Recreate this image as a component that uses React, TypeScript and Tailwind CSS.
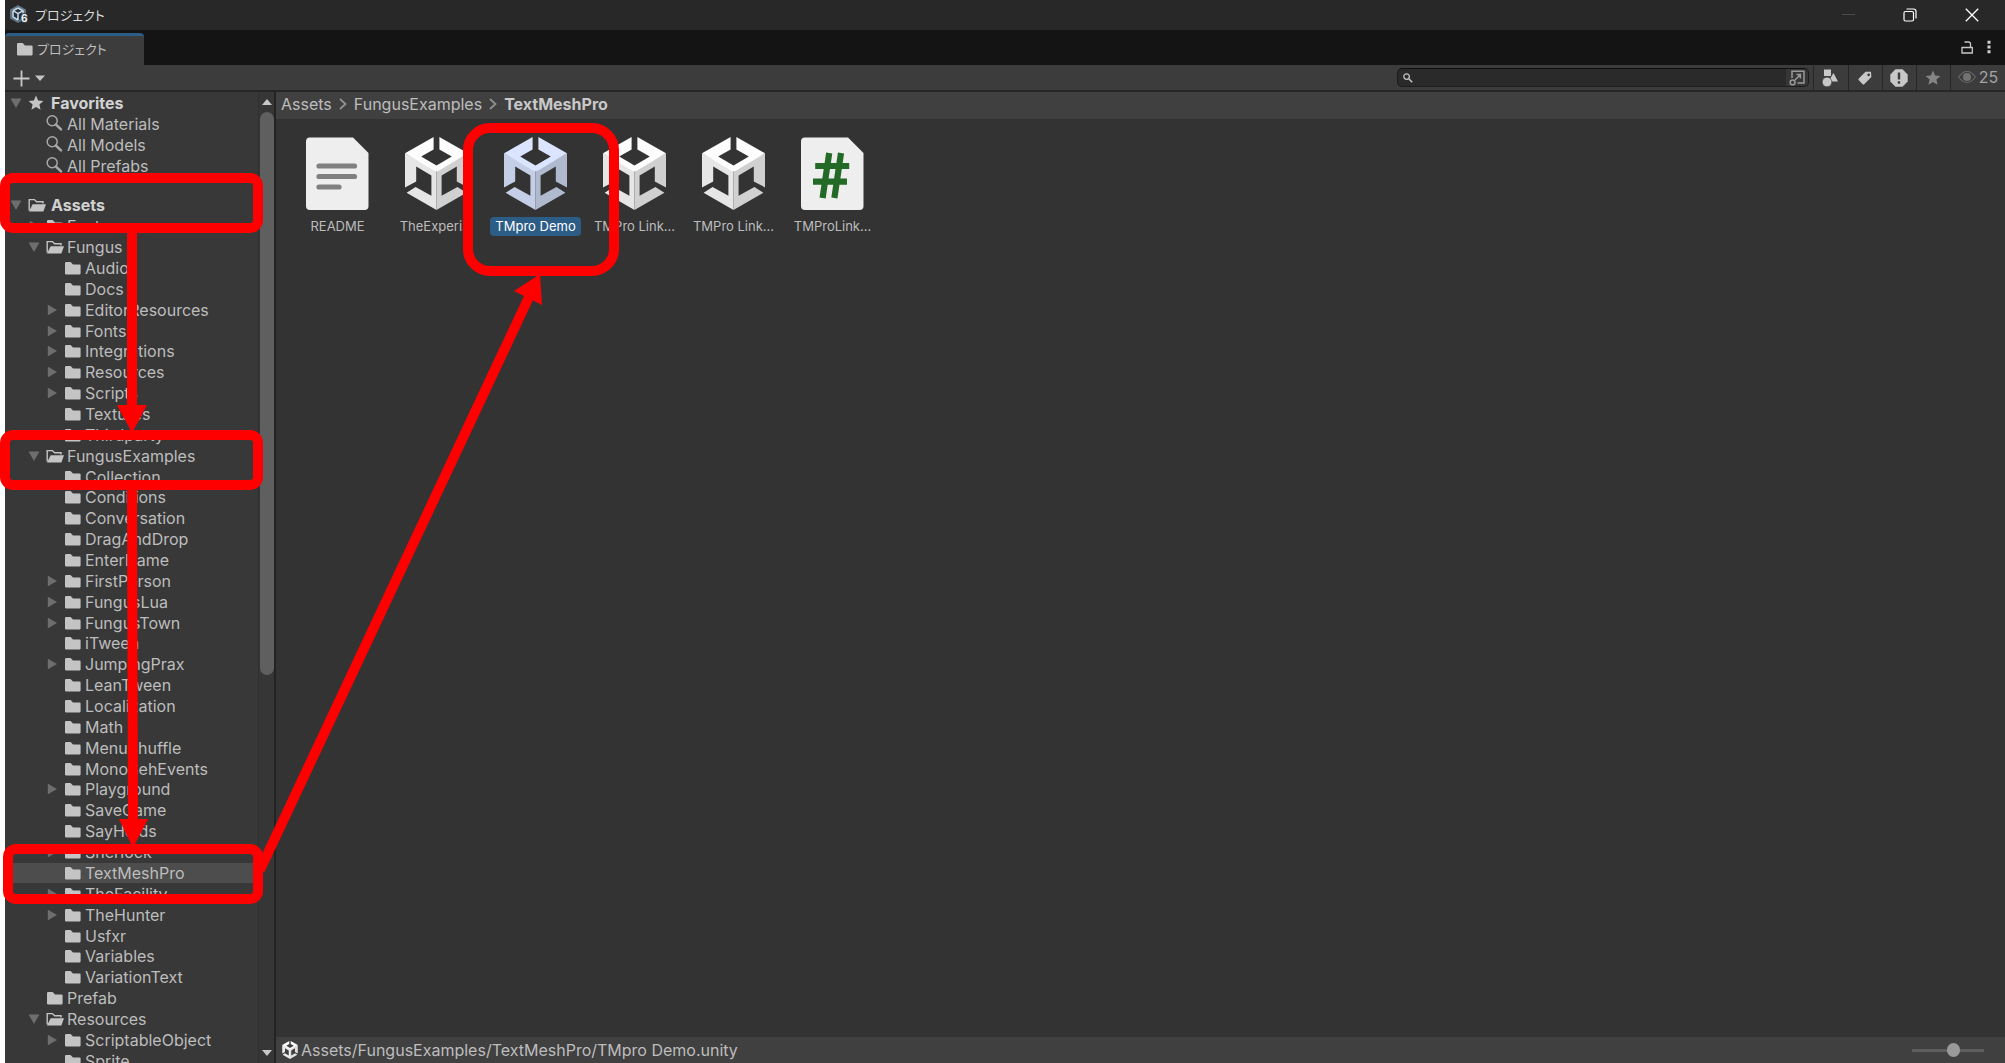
import { useState } from "react";
import { clsx } from "clsx";

type IconKind = "folder" | "open" | "search" | "star";
type Arrow = "down" | "right" | "none";

type TreeItem = {
  name: string;
  level: 0 | 1 | 2;
  icon: IconKind;
  arrow: Arrow;
};

const favorites: TreeItem[] = [
  { name: "Favorites", level: 0, icon: "star", arrow: "down" },
  { name: "All Materials", level: 1, icon: "search", arrow: "none" },
  { name: "All Models", level: 1, icon: "search", arrow: "none" },
  { name: "All Prefabs", level: 1, icon: "search", arrow: "none" },
];

function leaf(name: string): TreeItem {
  return { name, level: 2, icon: "folder", arrow: "none" };
}

function closed(name: string): TreeItem {
  return { name, level: 2, icon: "folder", arrow: "right" };
}

const assets: TreeItem[] = [
  { name: "Assets", level: 0, icon: "open", arrow: "down" },
  { name: "Fonts", level: 1, icon: "folder", arrow: "right" },
  { name: "Fungus", level: 1, icon: "open", arrow: "down" },
  leaf("Audio"),
  leaf("Docs"),
  closed("EditorResources"),
  closed("Fonts"),
  closed("Integrations"),
  closed("Resources"),
  closed("Scripts"),
  leaf("Textures"),
  closed("Thirdparty"),
  { name: "FungusExamples", level: 1, icon: "open", arrow: "down" },
  leaf("Collection"),
  leaf("Conditions"),
  leaf("Conversation"),
  leaf("DragAndDrop"),
  leaf("EnterName"),
  closed("FirstPerson"),
  closed("FungusLua"),
  closed("FungusTown"),
  leaf("iTween"),
  closed("JumpingPrax"),
  leaf("LeanTween"),
  leaf("Localization"),
  leaf("Math"),
  leaf("MenuShuffle"),
  leaf("MonoBehEvents"),
  closed("Playground"),
  leaf("SaveGame"),
  leaf("SayHolds"),
  closed("Sherlock"),
  leaf("TextMeshPro"),
  closed("TheFacility"),
  closed("TheHunter"),
  leaf("Usfxr"),
  leaf("Variables"),
  leaf("VariationText"),
  { name: "Prefab", level: 1, icon: "folder", arrow: "none" },
  { name: "Resources", level: 1, icon: "open", arrow: "down" },
  closed("ScriptableObject"),
  leaf("Sprite"),
];

const files = [
  { name: "README", kind: "text" },
  { name: "TheExperi...", kind: "scene" },
  { name: "TMpro Demo", kind: "scene" },
  { name: "TMPro Link...", kind: "scene" },
  { name: "TMPro Link...", kind: "scene" },
  { name: "TMProLink...", kind: "script" },
];

function FolderIcon() {
  return (
    <svg viewBox="0 0 18 16" className="h-4 w-[18px]" fill="#c4c4c4">
      <path d="M1 3.2Q1 2 2.2 2H6.6L9 4.4H15.6Q16.6 4.4 16.6 5.4V13.6Q16.6 14.4 15.8 14.4H1.8Q1 14.4 1 13.6Z" />
    </svg>
  );
}

function OpenFolderIcon() {
  return (
    <svg viewBox="0 0 18 16" className="h-4 w-[18px]">
      <path d="M1.2 13.6V2.6H6.4L8.6 4.8H15V6.6" fill="none" stroke="#c4c4c4" strokeWidth="1.4" />
      <path d="M4.6 7.2H18L15.4 14.4H1Z" fill="#c4c4c4" />
    </svg>
  );
}

function SearchIcon() {
  return (
    <svg viewBox="0 0 18 18" className="h-[18px] w-[18px]" fill="none" stroke="#a8a8a8">
      <circle cx="6.2" cy="5.8" r="5" strokeWidth="1.5" />
      <path d="M10 9.6L15 14.4" strokeWidth="2.6" strokeLinecap="round" />
    </svg>
  );
}

function StarIcon({ color }: { color: string }) {
  return (
    <svg viewBox="0 0 16 16" className="h-4 w-4" fill={color}>
      <path d="M8 .6L10.1 5.5L15.4 6L11.4 9.5L12.6 14.8L8 12L3.4 14.8L4.6 9.5L.6 6L5.9 5.5Z" />
    </svg>
  );
}

function Triangle({ arrow }: { arrow: Arrow }) {
  return (
    <svg viewBox="0 0 10 10" className="h-[10px] w-[10px] shrink-0" fill="#6e6e6e">
      {arrow === "down" && <path d="M-.4 .5H10.4L5 10Z" />}
      {arrow === "right" && <path d="M.8 -.4V10.4L10 5Z" />}
    </svg>
  );
}

function Chevron() {
  return (
    <svg viewBox="0 0 8 12" className="mx-[7px] h-3 w-2" fill="none" stroke="#909090" strokeWidth="1.8">
      <path d="M1 1L6.5 6L1 11" />
    </svg>
  );
}

function Cube({ top, left, right, className }: { top: string; left: string; right: string; className: string }) {
  return (
    <svg viewBox="0 0 63 73" className={className}>
      <path d="M0 16.3L31.5 33.5V73L1.6 55.8L10.6 50L26.4 58.8V38.6L11.2 29.6V44.4L0 50.4Z" fill={left} />
      <path d="M63 16.3L31.5 33.5V73L61.4 55.8L52.4 50L36.6 58.8V38.6L51.8 29.6V44.4L63 50.4Z" fill={right} />
      <path d="M28.6 0L0 16.3L28 33Q31.5 35.4 35 33L63 16.3L34.4 0V12.4L46.8 19.6L31.5 28.6L16.2 19.6L28.6 12.4Z" fill={top} />
    </svg>
  );
}

function FileIcon({ kind, selected }: { kind: string; selected: boolean }) {
  if (kind === "scene") {
    return selected ? (
      <Cube top="#dbe5ff" left="#c4cee6" right="#b0bacf" className="h-[73px] w-[63px]" />
    ) : (
      <Cube top="#fdfdfd" left="#e6e6e6" right="#d0d0d0" className="h-[73px] w-[63px]" />
    );
  }
  return (
    <svg viewBox="0 0 63 73" className="h-[73px] w-[63px]">
      <path d="M4 .5H47L62.5 16V69Q62.5 73 58.5 73H4Q0 73 0 69V4.5Q0 .5 4 .5Z" fill="#eeeeee" />
      {kind === "text" ? (
        <path d="M13 29H48.5M13 39.5H48.5M13 50H33" stroke="#808080" strokeWidth="5.2" strokeLinecap="round" />
      ) : (
        <path d="M28.2 16L21.6 61M40 16L33.4 61M14.2 29H48.2M12 44.7H46" stroke="#226a26" strokeWidth="6.2" />
      )}
    </svg>
  );
}

function TreeRow({
  item,
  selected,
  onSelect,
  className,
}: {
  item: TreeItem;
  selected: boolean;
  onSelect: () => void;
  className: string;
}) {
  return (
    <li className={clsx("flex min-h-0", className)}>
      <button
        type="button"
        onClick={onSelect}
        className={clsx(
          "flex min-h-0 flex-1 items-center text-left leading-5 whitespace-nowrap",
          item.level === 0 && "pl-[6px] font-bold text-[#d2d2d2]",
          item.level === 1 && "pl-6",
          item.level === 2 && "pl-[42px]",
          selected && "bg-[#4d4d4d]"
        )}
      >
        <Triangle arrow={item.arrow} />
        <span className={clsx("ml-[7px] flex w-[18px] shrink-0 items-center", item.level === 0 ? "mr-[5px]" : "mr-[3px]")}>
          {item.icon === "folder" && <FolderIcon />}
          {item.icon === "open" && <OpenFolderIcon />}
          {item.icon === "search" && <SearchIcon />}
          {item.icon === "star" && <StarIcon color="#c4c4c4" />}
        </span>
        {item.name}
      </button>
    </li>
  );
}

function TitleBar() {
  return (
    <header className="flex h-[30px] shrink-0 items-center bg-[#282828] pr-[2px] pl-1 text-[#dcdcdc]">
      <svg viewBox="0 0 20 20" className="h-5 w-5 overflow-visible">
        <path d="M9 0L17 4.5V13.5L9 18L1 13.5V4.5Z" fill="#5f7485" />
        <path d="M9 2.6L14.5 5.8V12.2L9 15.4L3.5 12.2V5.8Z" fill="#25303a" />
        <path
          d="M9 8.6V15M9 8.6L4 5.6M9 8.6L14 5.6M4 6V11.8L9 15M9 3L4 5.8M9 3L14 5.8V9"
          fill="none"
          stroke="#c8d6e0"
          strokeWidth="1.6"
        />
        <text x="12" y="17" fontSize="10" fontWeight="700" fill="#f0f4f8" stroke="#34424e" strokeWidth="2" paintOrder="stroke">
          6
        </text>
      </svg>
      <h1 className="ml-[6px] font-['Noto_Sans_CJK_JP',sans-serif] text-[13px] leading-5 [font-feature-settings:'palt']">
        プロジェクト
      </h1>
      <div className="ml-auto flex h-full">
        <button type="button" aria-label="Minimize" className="flex w-[61px] items-center justify-center">
          <svg viewBox="0 0 13 13" className="h-[13px] w-[13px]" stroke="#4a4a4a">
            <path d="M0 5.5H13" />
          </svg>
        </button>
        <button type="button" aria-label="Restore" className="flex w-[61px] items-center justify-center">
          <svg viewBox="0 0 14 14" className="h-[14px] w-[14px]" fill="none" stroke="#ffffff" strokeWidth="1.2">
            <rect x="1" y="3.5" width="9.5" height="9.5" rx="1.5" />
            <path d="M3.5 1H10.5Q13 1 13 3.5V10.5" />
          </svg>
        </button>
        <button type="button" aria-label="Close" className="flex w-[63px] items-center justify-center">
          <svg viewBox="0 0 14 14" className="h-[14px] w-[14px]" stroke="#ffffff" strokeWidth="1.3">
            <path d="M.8 .8L13.2 13.2M13.2 .8L.8 13.2" />
          </svg>
        </button>
      </div>
    </header>
  );
}

function TabStrip() {
  return (
    <div className="flex h-[35px] shrink-0 items-end bg-[#141414]">
      <button
        type="button"
        className="flex h-8 w-[139px] items-center rounded-t-[4px] border-t-[3px] border-[#2c5d87] bg-[#3c3c3c] pb-[3px] pl-[11px] text-[#bdbdbd]"
      >
        <FolderIcon />
        <span className="ml-[3px] font-['Noto_Sans_CJK_JP',sans-serif] text-[13px] leading-5 [font-feature-settings:'palt']">
          プロジェクト
        </span>
      </button>
      <div className="mb-[11px] ml-auto flex gap-[9px] pr-[9px]">
        <button type="button" aria-label="Lock">
          <svg viewBox="0 0 12 14" className="h-[14px] w-3" fill="none" stroke="#c8c8c8" strokeWidth="1.3">
            <path d="M1 7.5H11.3V13H1ZM3.5 2H7.5Q9.5 2 9.5 4V7.5" />
          </svg>
        </button>
        <button type="button" aria-label="More">
          <svg viewBox="0 0 14 14" className="h-[14px] w-[14px]" fill="#d0d0d0">
            <path d="M5.5 .8h3v3h-3zM5.5 5.5h3v3h-3zM5.5 10.2h3v3h-3z" />
          </svg>
        </button>
      </div>
    </div>
  );
}

const toolButton = "flex items-center justify-center border-l border-[#262626]";

function Toolbar() {
  return (
    <div className="flex h-[27px] shrink-0 border-b-2 border-[#262626] bg-[#3c3c3c]">
      <button type="button" aria-label="Create" className="flex items-center pl-2">
        <svg viewBox="0 0 32 18" className="h-[18px] w-8">
          <path d="M8.5 1.5V17.5M.5 9.5H16.5" stroke="#c8c8c8" strokeWidth="1.8" />
          <path d="M22 6.5H32L27 12Z" fill="#c4c4c4" />
        </svg>
      </button>
      <div className="ml-auto flex">
        <label className="my-[3px] mr-1 flex w-[412px] items-center overflow-hidden rounded-[5px] border border-[#1c1c1c] border-t-[#0f0f0f] bg-[#2a2a2a] pl-[5px]">
          <svg viewBox="0 0 10 10" className="h-[10px] w-[10px]" fill="none" stroke="#c4c4c4">
            <circle cx="3.6" cy="3.6" r="2.8" strokeWidth="1.3" />
            <path d="M5.8 5.8L9.2 9.2" strokeWidth="1.6" />
          </svg>
          <input type="search" aria-label="Search" className="h-full min-w-0 flex-1 bg-transparent px-1 text-sm outline-none" />
          <button type="button" aria-label="Open search" className="flex h-full w-[22px] items-center justify-center bg-[#363636]">
            <svg viewBox="0 0 16 16" className="h-4 w-4" fill="none" stroke="#9a9a9a" strokeWidth="1.5">
              <path d="M3 8V1.2H15V13H8.5M6 10L11 5M7.5 4.6H11.4V8.5" />
              <circle cx="3.6" cy="12.4" r="2.4" />
            </svg>
          </button>
        </label>
        <button type="button" aria-label="Filter by type" className={clsx(toolButton, "w-[35px] pr-[2px]")}>
          <svg viewBox="0 0 16 18" className="h-[18px] w-4" fill="#c8c8c8">
            <path d="M2 .5H9V7H2ZM11.5 4L16 12.5H9.5L8.5 9Z" />
            <circle cx="5" cy="13" r="4.8" stroke="#3c3c3c" strokeWidth=".6" />
          </svg>
        </button>
        <button type="button" aria-label="Filter by label" className={clsx(toolButton, "w-[34px] pr-[2px]")}>
          <svg viewBox="0 0 14 14" className="h-[14px] w-[14px]" fill="#c8c8c8" fillRule="evenodd">
            <path d="M7.5 .8H13L13.4 6L6.2 13.2Q5.4 14 4.6 13.2L.8 9.2Q0 8.4 .8 7.6ZM10.6 2.4A1.4 1.4 0 1 0 10.7 5.2A1.4 1.4 0 1 0 10.6 2.4Z" />
          </svg>
        </button>
        <button type="button" aria-label="Filter by import log" className={clsx(toolButton, "w-[34px] pr-[2px]")}>
          <svg viewBox="0 0 18 18" className="h-[18px] w-[18px]" fill="#c8c8c8">
            <path d="M5.5 .3H12.5L17.7 5.5V12.5L12.5 17.7H5.5L.3 12.5V5.5Z" />
            <path d="M9 3.5V10.5M9 12.3V14.8" stroke="#3c3c3c" strokeWidth="2.4" />
          </svg>
        </button>
        <button type="button" aria-label="Favorite" className={clsx(toolButton, "w-[34px] pr-[2px]")}>
          <StarIcon color="#858585" />
        </button>
        <button
          type="button"
          aria-label="Hidden packages"
          className={clsx(toolButton, "w-[55px] gap-[3px] pb-[2px] text-base text-[#a4a4a4]")}
        >
          <svg viewBox="0 0 18 12" className="h-3 w-[18px]">
            <path d="M.6 6Q9 -5 17.4 6Q9 17 .6 6Z" fill="none" stroke="#666666" strokeWidth="1.2" />
            <circle cx="9" cy="6" r="4" fill="#737373" />
          </svg>
          25
        </button>
      </div>
    </div>
  );
}

// Red guide: which folders to open, in order, and the scene to pick
function Guide() {
  return (
    <svg className="pointer-events-none absolute inset-0 h-full w-full" fill="none" stroke="#ff0000" strokeWidth="10">
      <rect x="5" y="178" width="253" height="50" rx="8" />
      <rect x="5" y="435" width="253" height="50" rx="8" />
      <rect x="8" y="849" width="250" height="50" rx="8" />
      <rect x="468" y="128" width="146" height="143" rx="22" />
      <path d="M132 230V408M132 488L133 822M260 870L529 297" />
      <path d="M117 405H147L132 433ZM119 819H148L133 848ZM514 291L542 305L540 274Z" fill="#ff0000" stroke="none" />
    </svg>
  );
}

export default function App() {
  const [folder, setFolder] = useState("TextMeshPro");
  const [file, setFile] = useState(2);
  const [size, setSize] = useState(60);

  return (
    <div className="relative flex h-screen flex-col overflow-hidden bg-white pl-[5px] font-[Inter,sans-serif] text-base text-[#bdbdbd]">
      <TitleBar />
      <TabStrip />
      <Toolbar />

      <div className="flex min-h-0 flex-1 bg-[#383838]">
        <aside className="flex w-[271px] shrink-0 border-r-2 border-[#232323]">
          <nav aria-label="Folders" className="flex min-w-0 flex-1 flex-col overflow-hidden">
            <ul className="shrink-0">
              {favorites.map((item) => (
                <TreeRow
                  key={item.name}
                  item={item}
                  selected={folder === item.name}
                  onSelect={() => setFolder(item.name)}
                  className="h-[21px]"
                />
              ))}
            </ul>
            <ul className="mt-[19px] -mb-2 flex min-h-0 flex-1 flex-col">
              {assets.map((item, i) => (
                <TreeRow
                  key={i}
                  item={item}
                  selected={folder === item.name}
                  onSelect={() => setFolder(item.name)}
                  className="flex-1"
                />
              ))}
            </ul>
          </nav>
          <div className="flex w-4 flex-col items-center border-l border-[#303030] bg-[#363636] py-[7px]">
            <svg viewBox="0 0 10 6" className="h-[6px] w-[10px]" fill="#c8c8c8">
              <path d="M0 6L5 0L10 6Z" />
            </svg>
            <div className="mt-[7px] w-full flex-1 pl-px">
              <div className="h-[60%] rounded-full bg-[#5f5f5f]" />
            </div>
            <svg viewBox="0 0 10 6" className="h-[6px] w-[10px]" fill="#c8c8c8">
              <path d="M0 0H10L5 6Z" />
            </svg>
          </div>
        </aside>

        <main className="flex min-w-0 flex-1 flex-col bg-[#333333]">
          <nav aria-label="Breadcrumb" className="flex h-[27px] shrink-0 items-center bg-[#404040] pb-1 pl-[5px]">
            <a href="#assets">Assets</a>
            <Chevron />
            <a href="#examples">FungusExamples</a>
            <Chevron />
            <a href="#textmeshpro" className="font-bold text-[#c8c8c8]">
              TextMeshPro
            </a>
          </nav>

          <ul className="flex min-h-0 flex-1 flex-wrap content-start pt-[18px] pl-3">
            {files.map((f, i) => (
              <li key={i}>
                <button type="button" onClick={() => setFile(i)} className="flex w-[99px] flex-col items-center">
                  <FileIcon kind={f.kind} selected={file === i} />
                  <span
                    className={clsx(
                      "mt-[7px] rounded-[4px] px-[5px] text-[13px] leading-[19px] whitespace-nowrap",
                      file === i && "bg-[#2c5d87] text-white"
                    )}
                  >
                    {f.name}
                  </span>
                </button>
              </li>
            ))}
          </ul>

          <footer className="flex h-[26px] shrink-0 items-center bg-[#404040] pr-[21px] pl-[6px]">
            <Cube top="#ffffff" left="#ededed" right="#e0e0e0" className="mr-[3px] h-[18px] w-4" />
            <span>Assets/FungusExamples/TextMeshPro/TMpro Demo.unity</span>
            <input
              type="range"
              aria-label="Icon size"
              value={size}
              onChange={(e) => setSize(Number(e.target.value))}
              className="ml-auto h-[3px] w-[72px] appearance-none bg-[#5e5e5e] [&::-webkit-slider-thumb]:h-[14px] [&::-webkit-slider-thumb]:w-[13px] [&::-webkit-slider-thumb]:appearance-none [&::-webkit-slider-thumb]:rounded-full [&::-webkit-slider-thumb]:bg-[#999999]"
            />
          </footer>
        </main>
      </div>

      <Guide />
    </div>
  );
}
